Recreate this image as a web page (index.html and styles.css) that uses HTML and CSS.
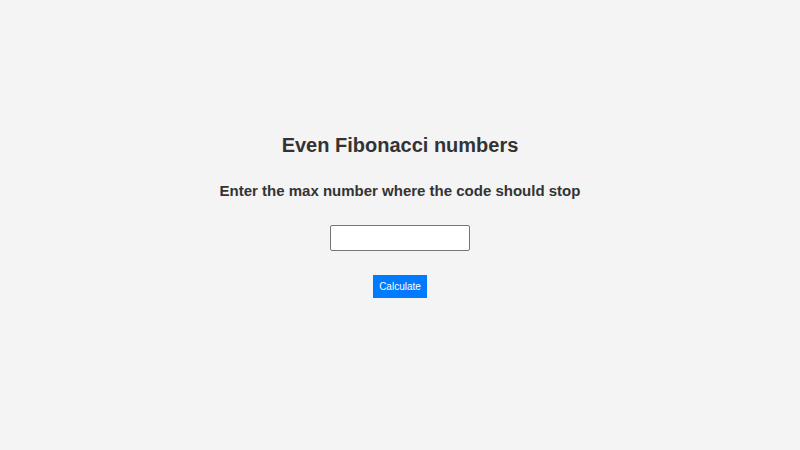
FILE: index.html
```html
<!DOCTYPE html>
<html lang="en">
<head>
    <meta charset="UTF-8">
    <meta name="viewport" content="width=device-width, initial-scale=1.0">
    <title>Even Fibonacci numbers</title>
    <link rel="stylesheet" href="styles.css">
</head>
<body>
    <div class="container">
        <h1>Even Fibonacci numbers</h1>
        <h2>Enter the max number where the code should stop</h2>
        <input type="number" id="maxNumber" class="number-input">
        <button class="calc-button" id="calcButton">Calculate</button>
        <p id="result" class="result"></p>
    </div>
</body>
</html>
```

FILE: styles.css
```css
* {
    box-sizing: border-box;
}
body {
    font-family: "Liberation Sans", Arial, Helvetica, sans-serif;
    margin: 0;
    background-color: #f4f4f4;
    color: #333333;
}
.container {
    min-height: 100vh;
    display: flex;
    flex-direction: column;
    align-items: center;
    justify-content: center;
    text-align: center;
    padding-bottom: 18px;
}
h1 {
    font-size: 20px;
    margin: 0 0 25px;
}
h2 {
    font-size: 15px;
    margin: 0 0 26px;
}
.number-input {
    width: 140px;
    height: 26px;
    border: 1px solid #767676;
    border-radius: 2px;
    background: #ffffff;
    margin-bottom: 24px;
}
.calc-button {
    font-family: "Liberation Sans", Arial, sans-serif;
    font-size: 10px;
    width: 54px;
    height: 23px;
    padding: 0;
    color: #ffffff;
    background-color: #007bff;
    border: none;
}
.result {
    margin: 0;
}
```
